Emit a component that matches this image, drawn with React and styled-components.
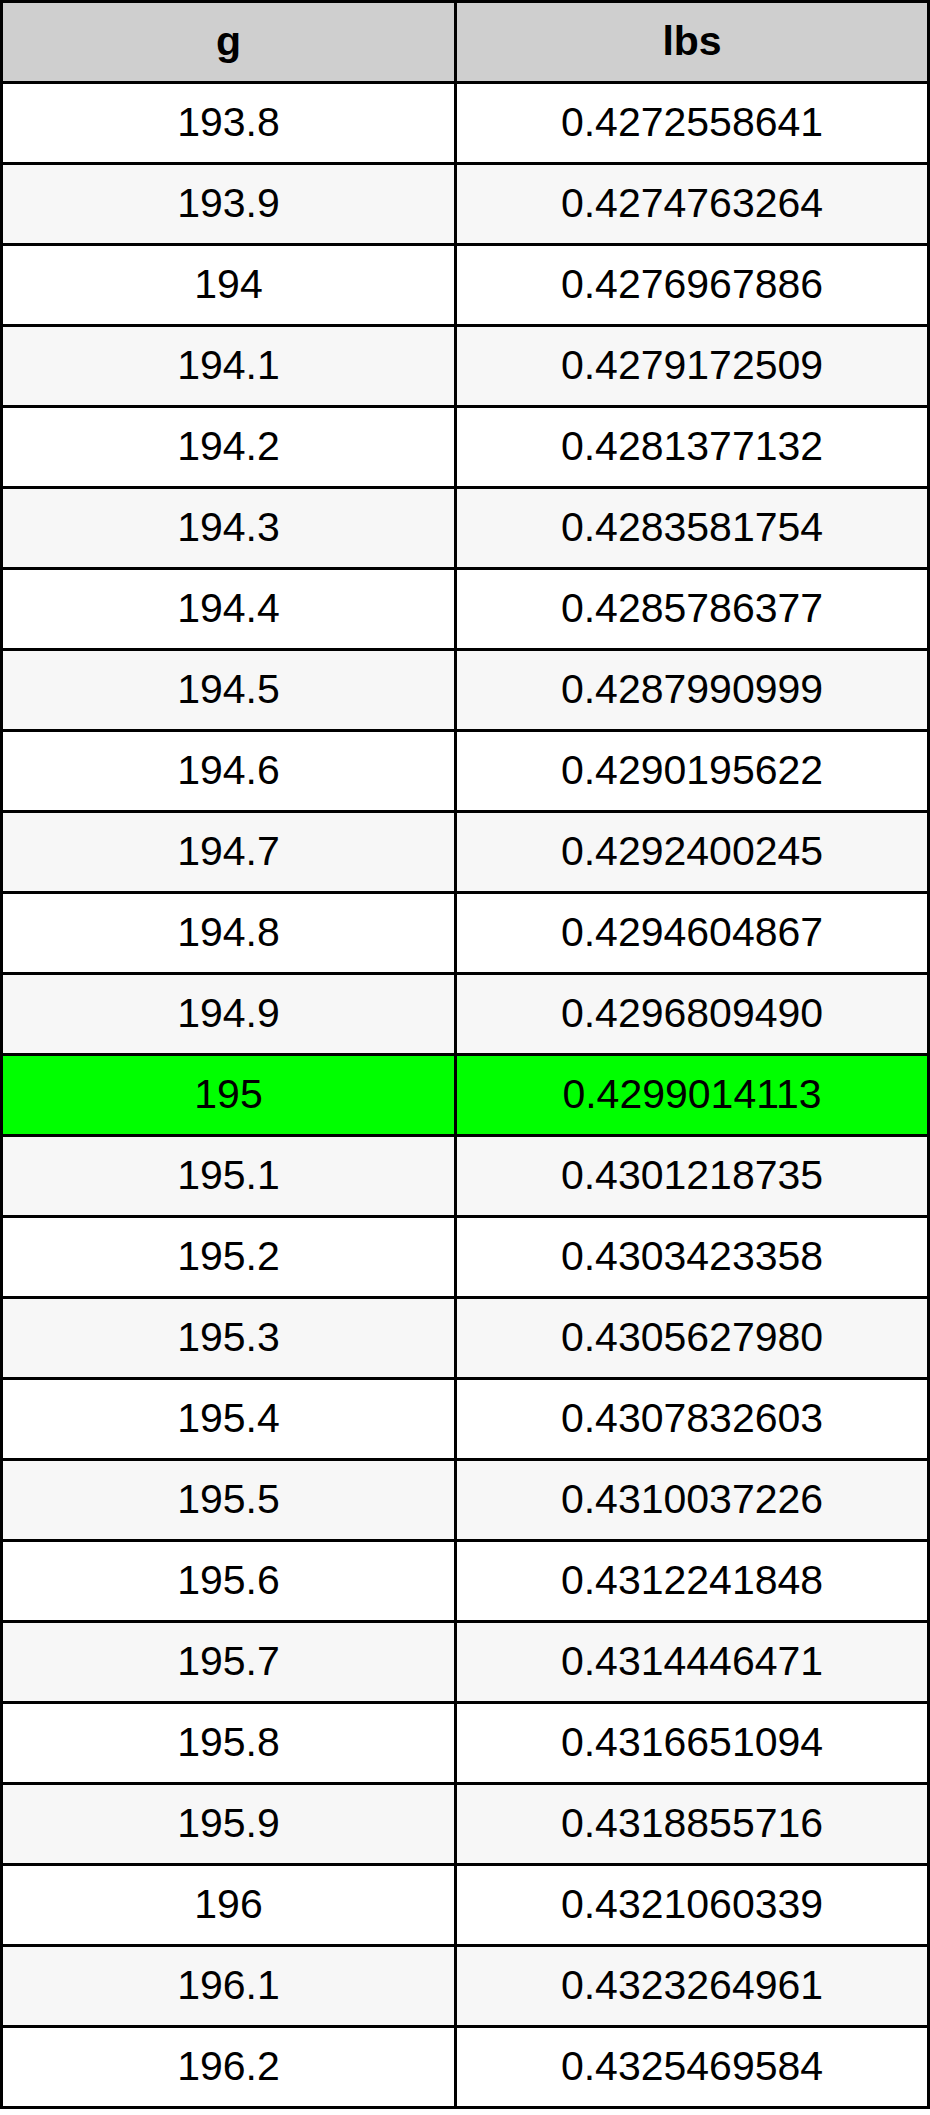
import React from 'react';
import styled, {createGlobalStyle} from 'styled-components';

const rows = [
    ['193.8', '0.4272558641'],
    ['193.9', '0.4274763264'],
    ['194', '0.4276967886'],
    ['194.1', '0.4279172509'],
    ['194.2', '0.4281377132'],
    ['194.3', '0.4283581754'],
    ['194.4', '0.4285786377'],
    ['194.5', '0.4287990999'],
    ['194.6', '0.4290195622'],
    ['194.7', '0.4292400245'],
    ['194.8', '0.4294604867'],
    ['194.9', '0.4296809490'],
    ['195', '0.4299014113'],
    ['195.1', '0.4301218735'],
    ['195.2', '0.4303423358'],
    ['195.3', '0.4305627980'],
    ['195.4', '0.4307832603'],
    ['195.5', '0.4310037226'],
    ['195.6', '0.4312241848'],
    ['195.7', '0.4314446471'],
    ['195.8', '0.4316651094'],
    ['195.9', '0.4318855716'],
    ['196', '0.4321060339'],
    ['196.1', '0.4323264961'],
    ['196.2', '0.4325469584'],
];

const backgrounds = {
    head: '#cfcfcf',
    even: '#ffffff',
    odd: '#f7f7f7',
    hit: '#00ff00',
};

export default function App() {
    return (
        <>
            <GlobalStyle/>
            <Table>
                <Row>
                    <Cell $variant="head" $bold>g</Cell>
                    <Cell $variant="head" $bold>lbs</Cell>
                </Row>
                {rows.map(([g, lbs], i) => {
                    const variant = g === '195' ? 'hit' : i % 2 === 0 ? 'even' : 'odd';
                    return (
                        <Row key={g}>
                            <Cell $variant={variant}>{g}</Cell>
                            <Cell $variant={variant}>{lbs}</Cell>
                        </Row>
                    );
                })}
            </Table>
        </>
    );
}

const GlobalStyle = createGlobalStyle`
    body {
        margin: 0;
        background: #fff;
        font-family: "Liberation Sans", Arial, sans-serif;
    }
`;

const Table = styled.div`
    width: 930px;
    box-sizing: border-box;
    display: flex;
    flex-direction: column;
    gap: 3px;
    padding: 3px;
    background: #000;
`;

const Row = styled.div`
    display: grid;
    grid-template-columns: 451px 470px;
    gap: 3px;
    height: 78px;
`;

const Cell = styled.div`
    display: flex;
    align-items: center;
    justify-content: center;
    background: ${p => backgrounds[p.$variant]};
    color: #000;
    font-size: 41px;
    font-weight: ${p => (p.$bold ? 700 : 400)};
    padding-bottom: 2px;
`;
